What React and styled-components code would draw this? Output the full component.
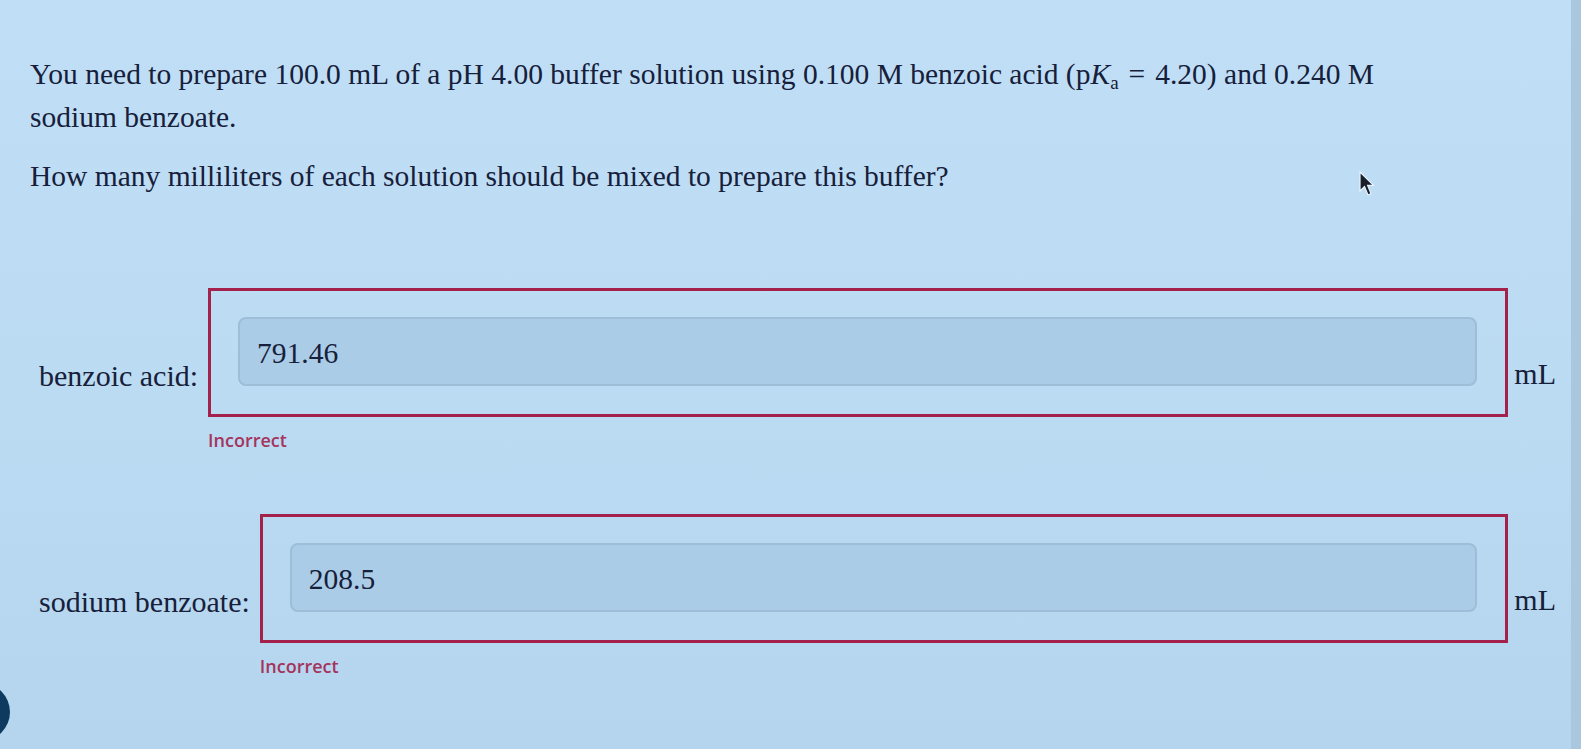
import { createGlobalStyle, styled } from "styled-components";

const GlobalStyle = createGlobalStyle`
  html, body {
    margin: 0;
    padding: 0;
    background: #bcdcf4;
  }
  body {
    font-family: "Liberation Serif", "Times New Roman", serif;
    color: #17203a;
  }
`;

const answers = [
  { label: "benzoic acid:", value: "791.46" },
  { label: "sodium benzoate:", value: "208.5" },
];

export default function App() {
  return (
    <Page>
      <GlobalStyle />
      <Question>
        You need to prepare 100.0 mL of a pH 4.00 buffer solution using 0.100 M
        benzoic acid (
        <Formula>
          p<i>K</i>
          <sub>a</sub>
          <Op>=</Op>4.20
        </Formula>
        ) and 0.240 M sodium benzoate.
      </Question>
      <Question>
        How many milliliters of each solution should be mixed to prepare this
        buffer?
      </Question>
      <Answers>
        {answers.map((a) => (
          <Field key={a.label}>
            <Label>{a.label}</Label>
            <Box>
              <Input>{a.value}</Input>
            </Box>
            <Unit>mL</Unit>
            <Feedback>Incorrect</Feedback>
          </Field>
        ))}
      </Answers>
      <Cursor width="18" height="26" viewBox="0 0 18 26">
        <path
          d="M2 1 L2 20 L6.5 15.5 L10 24 L13 22.6 L9.6 14.4 L15.5 14.4 Z"
          fill="#1a1f2c"
          stroke="#e8f2fb"
          strokeWidth="1.2"
        />
      </Cursor>
      <HelpButton />
    </Page>
  );
}

const Page = styled.div`
  position: relative;
  width: 1581px;
  height: 749px;
  overflow: hidden;
  box-sizing: border-box;
  padding: 53px 15px 0 30px;
  background: linear-gradient(180deg, #c0dff7 0%, #bbdbf3 55%, #b5d5ee 100%);
  border-right: 10px solid #a9c7df;
`;

const Question = styled.p`
  margin: 0 0 16px;
  font-size: 29.5px;
  line-height: 43px;
  max-width: 1400px;
`;

const Formula = styled.span`
  white-space: nowrap;

  i {
    font-style: italic;
  }

  sub {
    font-size: 19px;
    line-height: 1;
    position: relative;
    top: 5px;
    vertical-align: baseline;
  }
`;

const Op = styled.span`
  padding: 0 10px;
`;

const Answers = styled.div`
  display: flex;
  flex-direction: column;
  gap: 62px;
  margin-top: 90px;
`;

const Field = styled.div`
  display: grid;
  grid-template-columns: auto 1fr auto;
  align-items: center;
  padding-left: 9px;
`;

const Label = styled.span`
  font-size: 30px;
  padding-top: 46px;
  padding-right: 10px;
  white-space: nowrap;
`;

const Box = styled.div`
  box-sizing: border-box;
  height: 129px;
  border: 3px solid #a3214a;
  padding: 26px 28px 28px 27px;
  display: flex;
`;

const Input = styled.div`
  flex: 1;
  box-sizing: border-box;
  border: 2px solid #9ebdd7;
  border-radius: 8px;
  background: #abcce7;
  padding: 4px 17px 0;
  font-size: 29.5px;
  display: flex;
  align-items: center;
`;

const Unit = styled.span`
  font-size: 30px;
  padding-top: 42px;
  padding-left: 6px;
`;

const Feedback = styled.div`
  grid-column: 2;
  font-family: "Open Sans", "Liberation Sans", sans-serif;
  font-weight: 600;
  font-size: 18px;
  color: #a5345d;
  margin-top: 11px;
`;

const Cursor = styled.svg`
  position: absolute;
  left: 1358px;
  top: 171px;
`;

const HelpButton = styled.div`
  position: absolute;
  left: -48px;
  top: 683px;
  width: 58px;
  height: 58px;
  border-radius: 50%;
  background: #0d3a5e;
`;
